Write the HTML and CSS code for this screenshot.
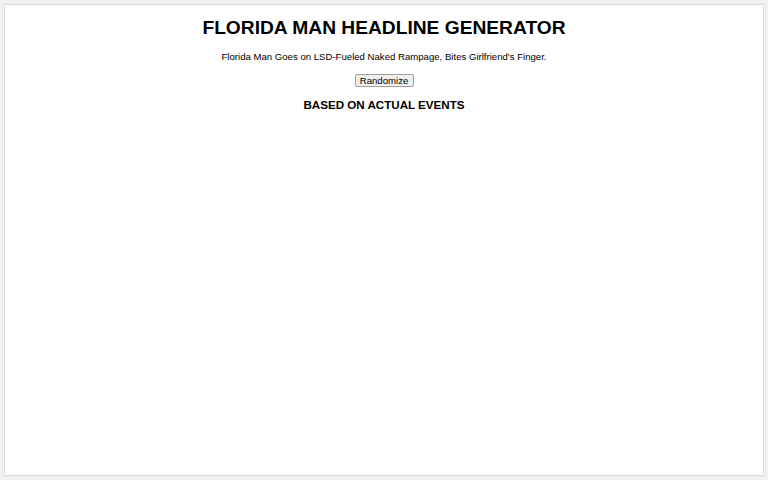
FILE: index.html
```html
<!DOCTYPE html>
<html>
<head>
  <title>Florida Man Headline Generator</title>
  <link rel="stylesheet" href="styles.css">
</head>
<body>
  <div class="page">
    <h1>FLORIDA MAN HEADLINE GENERATOR</h1>
    <p class="headline" id="headline">Florida Man Goes on LSD-Fueled Naked Rampage, Bites Girlfriend's Finger.</p>
    <button id="randomize">Randomize</button>
    <h3>BASED ON ACTUAL EVENTS</h3>
  </div>
</body>
</html>
```
FILE: styles.css
```css
body {
  margin: 0;
  padding: 4px;
  height: 100vh;
  box-sizing: border-box;
  background-color: #f1f1f1;
  font-family: "Liberation Sans", Arial, sans-serif;
}

.page {
  height: 100%;
  box-sizing: border-box;
  background-color: #fff;
  border: 1px solid #dcdcdc;
  display: flex;
  flex-direction: column;
  align-items: center;
  padding-top: 12px;
}

.page h1 {
  font-size: 19.2px;
  line-height: 22px;
  margin: 0;
  color: #000;
}

.headline {
  font-size: 9.6px;
  line-height: 11px;
  margin: 12px 0;
}

#randomize {
  font-family: "Liberation Sans", Arial, sans-serif;
  font-size: 9.6px;
  line-height: 11px;
  width: 59px;
  padding: 0;
  background-color: #efefef;
  border: 1px solid #a0a0a0;
  border-radius: 2px;
  color: #000;
}

.page h3 {
  font-size: 11.6px;
  line-height: 13px;
  margin: 11px 0 0;
}
```
